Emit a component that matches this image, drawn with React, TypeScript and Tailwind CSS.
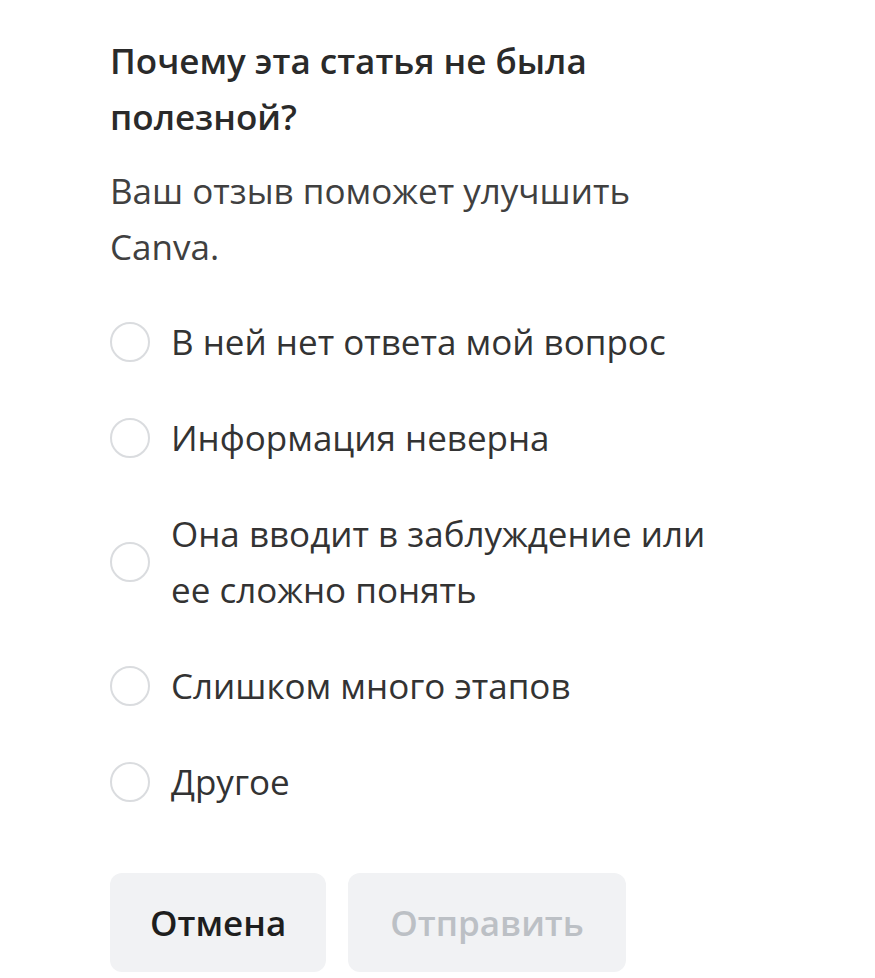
const options = [
  "В ней нет ответа мой вопрос",
  "Информация неверна",
  "Она вводит в заблуждение или ее сложно понять",
  "Слишком много этапов",
  "Другое",
];

export default function App() {
  return (
    <div className="min-h-screen bg-white font-['Open_Sans',sans-serif] text-[35px] leading-[56px]">
      <div className="w-[615px] pl-[110px] pt-[33px] box-content">
        <h2 className="text-[35px] font-semibold text-[#2a2a2a]">Почему эта статья не была полезной?</h2>
        <p className="mt-[18px] text-[#404040]">Ваш отзыв поможет улучшить Canva.</p>
        <div className="mt-[39px] flex flex-col gap-[40px]">
          {options.map((o) => (
            <label key={o} className="flex items-center gap-[21px] text-[#333]">
              <span className="h-[40px] w-[40px] shrink-0 rounded-full border-2 border-[#dadcdf] bg-white" />
              <span>{o}</span>
            </label>
          ))}
        </div>
        <div className="mt-[63px] flex gap-[22px]">
          <button className="h-[99px] rounded-[12px] bg-[#f1f2f4] px-[40px] font-semibold text-[#1e1e1e]">
            Отмена
          </button>
          <button disabled className="h-[99px] rounded-[12px] bg-[#f1f2f4] px-[42px] font-semibold text-[#bcc0c5]">
            Отправить
          </button>
        </div>
      </div>
    </div>
  );
}
